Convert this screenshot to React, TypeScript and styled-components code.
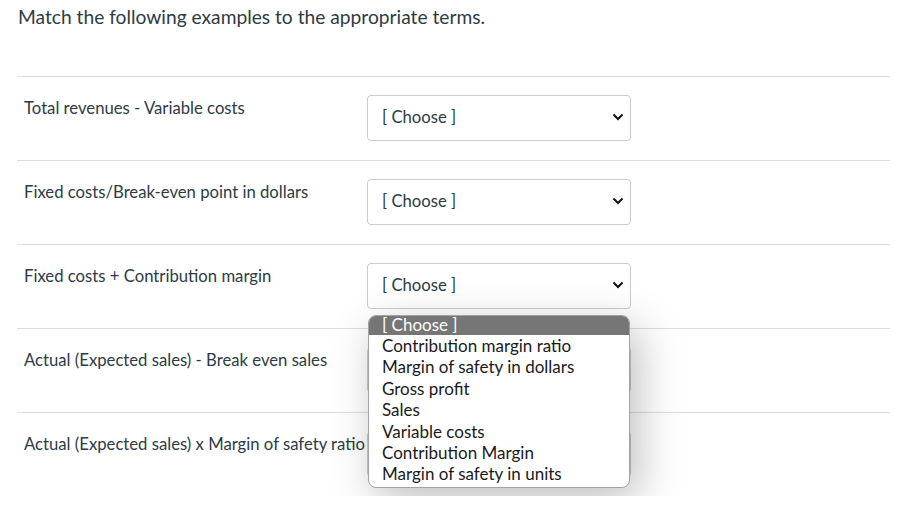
import styled, { createGlobalStyle } from 'styled-components';

const GlobalStyle = createGlobalStyle`
  body {
    margin: 0;
    background: #fff;
    font-family: Lato, "Open Sans", sans-serif;
    color: #2d3b45;
  }
`;

const Question = styled.div`
  padding: 0 22px 0 17px;
`;

const Prompt = styled.p`
  margin: 0;
  padding: 5px 0 0 1px;
  height: 71px;
  font-size: 19.2px;
  line-height: 24px;
`;

const Row = styled.div`
  display: flex;
  align-items: flex-start;
  border-top: 1px solid #dcdfe1;
  padding: 18px 0 19px 7px;
`;

const Label = styled.div`
  flex: 0 0 343px;
  padding-top: 3px;
  font-size: 16.7px;
  line-height: 20px;
  white-space: nowrap;
`;

const SelectWrap = styled.div<{ $open?: boolean }>`
  position: relative;
  z-index: ${(p) => (p.$open ? 5 : 'auto')};
`;

const SelectBox = styled.div`
  display: flex;
  align-items: center;
  justify-content: space-between;
  box-sizing: border-box;
  width: 264px;
  height: 46px;
  padding: 0 6px 2px 14px;
  border: 1px solid #c7cdd1;
  border-radius: 4px;
  background: #fff;
  font-size: 16.7px;
  color: #2d3b45;
`;

const Chevron = () => (
  <svg width="12" height="8" viewBox="0 0 12 8" aria-hidden="true">
    <path d="M1.5 1.5 6 6l4.5-4.5" fill="none" stroke="#111" strokeWidth="2" />
  </svg>
);

const Menu = styled.ul`
  position: absolute;
  top: calc(100% + 6px);
  left: 1px;
  box-sizing: border-box;
  width: 262px;
  margin: 0;
  padding: 0 0 2px;
  list-style: none;
  background: #fff;
  border: 1px solid #a3a3a3;
  border-radius: 8px;
  overflow: hidden;
  box-shadow: 8px 12px 44px rgba(0, 0, 0, 0.26);
`;

const Option = styled.li<{ $active?: boolean }>`
  padding: 0 13px;
  height: ${(p) => (p.$active ? '19px' : '21.4px')};
  line-height: ${(p) => (p.$active ? '17px' : '21px')};
  font-size: 17px;
  white-space: nowrap;
  color: ${(p) => (p.$active ? '#fff' : '#1a1a1a')};
  background: ${(p) => (p.$active ? '#767676' : 'transparent')};
`;

const options = [
  'Contribution margin ratio',
  'Margin of safety in dollars',
  'Gross profit',
  'Sales',
  'Variable costs',
  'Contribution Margin',
  'Margin of safety in units',
];

const rows = [
  'Total revenues - Variable costs',
  'Fixed costs/Break-even point in dollars',
  'Fixed costs + Contribution margin',
  'Actual (Expected sales) - Break even sales',
  'Actual (Expected sales) x Margin of safety ratio',
];

export default function App() {
  return (
    <>
      <GlobalStyle />
      <Question>
        <Prompt>Match the following examples to the appropriate terms.</Prompt>
        {rows.map((label, i) => (
          <Row key={label}>
            <Label>{label}</Label>
            <SelectWrap $open={i === 2}>
              <SelectBox>
                <span>[ Choose ]</span>
                <Chevron />
              </SelectBox>
              {i === 2 && (
                <Menu>
                  <Option $active>[ Choose ]</Option>
                  {options.map((o) => (
                    <Option key={o}>{o}</Option>
                  ))}
                </Menu>
              )}
            </SelectWrap>
          </Row>
        ))}
      </Question>
    </>
  );
}
